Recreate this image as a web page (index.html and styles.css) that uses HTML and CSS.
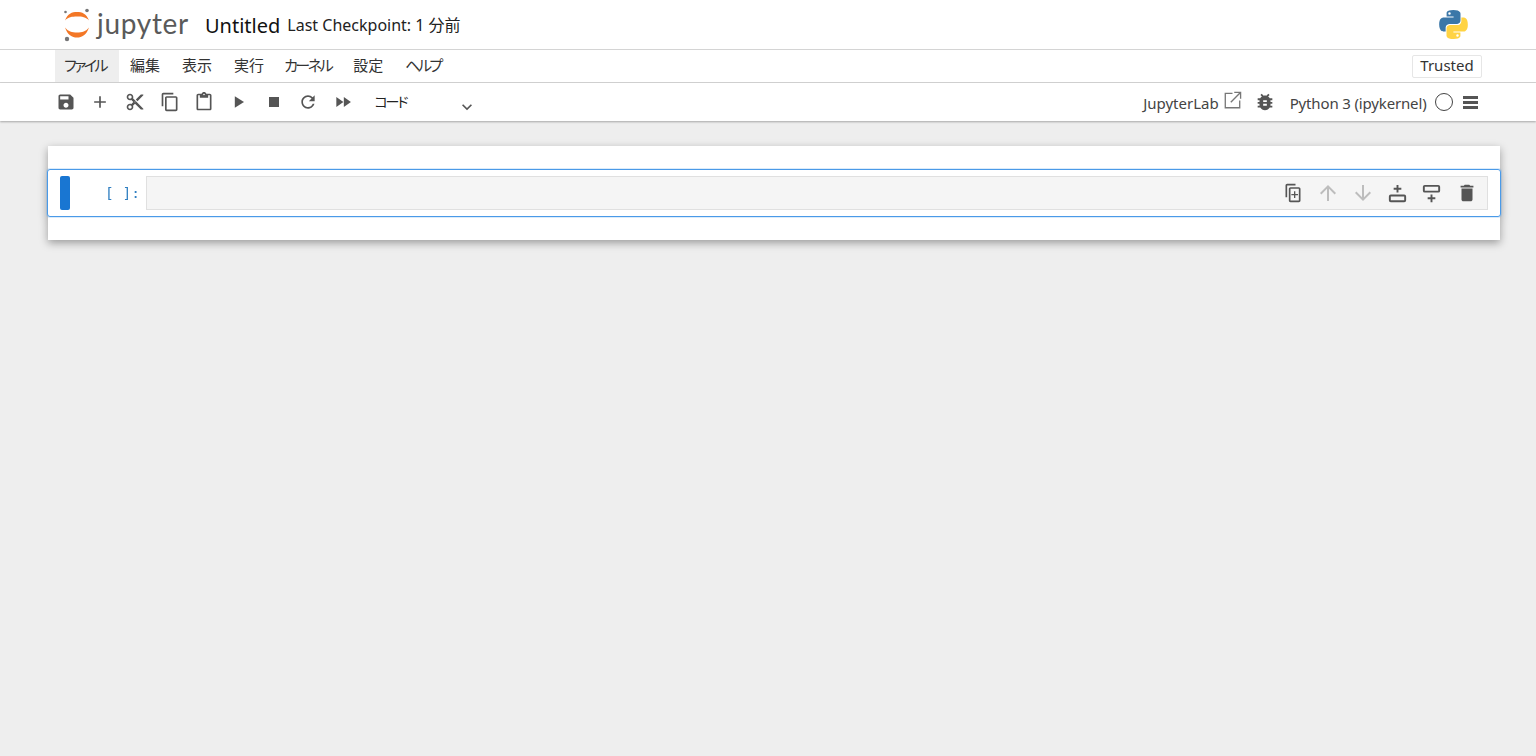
FILE: index.html
```html
<!DOCTYPE html>
<html lang="ja">
<head>
<meta charset="utf-8">
<title>Untitled</title>
<link rel="stylesheet" href="styles.css">
</head>
<body>
<header class="header">
  <div class="brand">
    <svg class="brand-mark" viewBox="0 0 28 34" aria-hidden="true">
      <path class="swirl" d="M2 12.5C4.5 5.5 9 4 14 4s9.500 1.500 12 8.500C23 9 19 8.500 14 8.500S5 9 2 12.500z"/>
      <path class="swirl" d="M2 19.500C4.500 27 9 29.500 14 29.500s9.500-2.500 12-10C23 23.500 19 24.500 14 24.500S5 23.500 2 19.500z"/>
      <circle class="dot" cx="2.500" cy="4" r="1.300"/>
      <circle class="dot" cx="24" cy="2.500" r="1.800"/>
      <circle class="dot" cx="4" cy="31" r="2.200"/>
    </svg>
    <span class="wordmark">jupyter</span>
  </div>
  <span class="nb-name">Untitled</span>
  <span class="checkpoint">Last Checkpoint: 1 分前</span>
  <span class="spacer"></span>
  <svg class="py-logo" viewBox="0 0 111 111" aria-hidden="true">
    <path class="py-blue" d="M54.900 0C26.900.1 29.100 12.200 29.100 12.200v12.500h26.700v3.800H18.500S.6 26.400.6 54.700c0 28.300 15.600 27.300 15.600 27.300h9.300V68.900s-.5-15.600 15.400-15.600h26.500s14.900.2 14.900-14.400V14.700S84.500 0 54.900 0zM40.200 8.500a4.800 4.800 0 1 1 0 9.600 4.800 4.800 0 0 1 0-9.600z"/>
    <path class="py-yellow" transform="rotate(180 55.500 55.500)" d="M54.900 0C26.900.1 29.100 12.200 29.100 12.200v12.500h26.700v3.800H18.500S.6 26.400.6 54.700c0 28.300 15.600 27.300 15.600 27.300h9.300V68.900s-.5-15.600 15.400-15.600h26.500s14.900.2 14.900-14.400V14.700S84.500 0 54.900 0zM40.200 8.500a4.800 4.800 0 1 1 0 9.600 4.800 4.800 0 0 1 0-9.600z"/>
  </svg>
</header>

<nav class="menubar">
  <a class="menu-item kana active">ファイル</a>
  <a class="menu-item">編集</a>
  <a class="menu-item">表示</a>
  <a class="menu-item">実行</a>
  <a class="menu-item kana tight">カーネル</a>
  <a class="menu-item">設定</a>
  <a class="menu-item kana">ヘルプ</a>
  <span class="spacer"></span>
  <span class="trusted">Trusted</span>
</nav>

<div class="toolbar">
  <button class="tool"><svg viewBox="0 0 24 24"><path d="M17 3H5c-1.110 0-2 .9-2 2v14c0 1.100.89 2 2 2h14c1.100 0 2-.9 2-2V7l-4-4zm-5 16c-1.660 0-3-1.340-3-3s1.340-3 3-3 3 1.340 3 3-1.340 3-3 3zm3-10H5V5h10v4z"/></svg></button>
  <button class="tool"><svg viewBox="0 0 24 24"><path d="M19 13h-6v6h-2v-6H5v-2h6V5h2v6h6v2z"/></svg></button>
  <button class="tool"><svg viewBox="0 0 24 24"><path d="M9.640 7.640c.23-.5.36-1.050.36-1.640 0-2.210-1.790-4-4-4S2 3.790 2 6s1.790 4 4 4c.59 0 1.140-.13 1.640-.36L10 12l-2.360 2.360C7.140 14.130 6.590 14 6 14c-2.210 0-4 1.790-4 4s1.790 4 4 4 4-1.790 4-4c0-.59-.13-1.140-.36-1.640L12 14l7 7h3v-1L9.640 7.640zM6 8c-1.100 0-2-.89-2-2s.9-2 2-2 2 .89 2 2-.9 2-2 2zm0 12c-1.100 0-2-.89-2-2s.9-2 2-2 2 .89 2 2-.9 2-2 2zm6-7.500c-.28 0-.5-.22-.5-.5s.22-.5.5-.5.5.22.5.5-.22.5-.5.5zM19 3l-6 6 2 2 7-7V3h-3z"/></svg></button>
  <button class="tool"><svg viewBox="0 0 24 24"><path d="M16 1H4c-1.100 0-2 .9-2 2v14h2V3h12V1zm3 4H8c-1.100 0-2 .9-2 2v14c0 1.100.9 2 2 2h11c1.100 0 2-.9 2-2V7c0-1.100-.9-2-2-2zm0 16H8V7h11v14z"/></svg></button>
  <button class="tool"><svg viewBox="0 0 24 24"><path d="M19 2h-4.180C14.400.84 13.300 0 12 0c-1.300 0-2.400.84-2.820 2H5c-1.100 0-2 .9-2 2v16c0 1.100.9 2 2 2h14c1.100 0 2-.9 2-2V4c0-1.100-.9-2-2-2zm-7 0c.55 0 1 .45 1 1s-.45 1-1 1-1-.45-1-1 .45-1 1-1zm7 18H5V4h2v3h10V4h2v16z"/></svg></button>
  <button class="tool"><svg viewBox="0 0 24 24"><path d="M7 5v14l11-7z"/></svg></button>
  <button class="tool"><svg viewBox="0 0 24 24"><path d="M6 6h12v12H6z"/></svg></button>
  <button class="tool"><svg viewBox="0 0 24 24"><path d="M17.650 6.350C16.200 4.900 14.210 4 12 4c-4.420 0-7.990 3.580-7.990 8s3.570 8 7.990 8c3.730 0 6.840-2.550 7.730-6h-2.080c-.82 2.330-3.040 4-5.650 4-3.310 0-6-2.690-6-6s2.690-6 6-6c1.660 0 3.140.69 4.220 1.780L13 11h7V4l-2.350 2.350z"/></svg></button>
  <button class="tool"><svg viewBox="0 0 24 24"><path d="M4 18l8.500-6L4 6v12zm9-12v12l8.500-6L13 6z"/></svg></button>
  <div class="cell-type">
    <span class="cell-type-label">コード</span>
    <svg class="chevron" viewBox="0 0 24 24"><path d="M7.410 8.590 12 13.170l4.590-4.580L18 10l-6 6-6-6z"/></svg>
  </div>
  <span class="spacer"></span>
  <span class="tool-text">JupyterLab</span>
  <svg class="ext-icon" viewBox="0 0 24 24"><path d="M21 21H3V3h9v1.500H4.500v15h15V12H21zM14 2h8v8h-1.500V4.600l-9.900 9.900-1.100-1.100 9.900-9.900H14z"/></svg>
  <svg class="bug-icon" viewBox="0 0 24 24"><path d="M20 8h-2.810c-.45-.78-1.070-1.450-1.820-1.960L17 4.410 15.590 3l-2.170 2.170C12.960 5.060 12.490 5 12 5c-.49 0-.96.06-1.410.17L8.410 3 7 4.410l1.620 1.630C7.880 6.550 7.260 7.220 6.810 8H4v2h2.090c-.05.33-.09.66-.09 1v1H4v2h2v1c0 .34.04.67.09 1H4v2h2.810c1.040 1.790 2.970 3 5.190 3s4.150-1.210 5.190-3H20v-2h-2.090c.05-.33.09-.66.09-1v-1h2v-2h-2v-1c0-.34-.04-.67-.09-1H20V8zm-6 8h-4v-2h4v2zm0-4h-4v-2h4v2z"/></svg>
  <span class="tool-text kernel">Python 3 (ipykernel)</span>
  <span class="kernel-circle"></span>
  <span class="burger"><i></i><i></i><i></i></span>
</div>

<main class="site">
  <section class="notebook">
    <div class="cell">
      <div class="collapser"></div>
      <div class="prompt">[ ]:</div>
      <div class="input">
        <button class="cell-tool"><svg viewBox="0 0 24 24"><path d="M15 1H5c-1.100 0-2 .9-2 2v14h2V3h10V1zm4 4H9c-1.100 0-2 .9-2 2v14c0 1.100.9 2 2 2h10c1.100 0 2-.9 2-2V7c0-1.100-.9-2-2-2zm0 16H9V7h10v14zM13.200 10v3.200H10v1.600h3.200V18h1.600v-3.200H18v-1.600h-3.200V10z"/></svg></button>
        <button class="cell-tool muted"><svg viewBox="0 0 24 24"><path d="M4 12l1.410 1.410L11 7.830V20h2V7.830l5.580 5.590L20 12l-8-8-8 8z"/></svg></button>
        <button class="cell-tool muted"><svg viewBox="0 0 24 24"><path d="M20 12l-1.410-1.410L13 16.170V4h-2v12.170l-5.580-5.590L4 12l8 8 8-8z"/></svg></button>
        <button class="cell-tool wide"><svg viewBox="0 0 24 24"><path d="M11 3h2v3h3v2h-3v3h-2V8H8V6h3zM5 13h14a2 2 0 0 1 2 2v4a2 2 0 0 1-2 2H5a2 2 0 0 1-2-2v-4a2 2 0 0 1 2-2zm0 2v4h14v-4z"/></svg></button>
        <button class="cell-tool wide"><svg viewBox="0 0 24 24"><path d="M5 3h14a2 2 0 0 1 2 2v4a2 2 0 0 1-2 2H5a2 2 0 0 1-2-2V5a2 2 0 0 1 2-2zm0 2v4h14V5zM11 13h2v3h3v2h-3v3h-2v-3H8v-2h3z"/></svg></button>
        <button class="cell-tool trash"><svg viewBox="0 0 24 24"><path d="M6 19c0 1.100.9 2 2 2h8c1.100 0 2-.9 2-2V7H6v12zM19 4h-3.500l-1-1h-5l-1 1H5v2h14V4z"/></svg></button>
      </div>
    </div>
  </section>
</main>
</body>
</html>
```
FILE: styles.css
```css
* { box-sizing: border-box; }
html, body { height: 100%; }
body {
  margin: 0;
  background: #eeeeee;
  color: #333;
  font-family: "Noto Sans", "Noto Sans CJK JP", sans-serif;
  font-size: 15px;
  font-feature-settings: "palt";
  display: flex;
  flex-direction: column;
  overflow: hidden;
}
.spacer { flex: 1; }

.header {
  height: 50px;
  flex: none;
  background: #fff;
  border-bottom: 1px solid #d4d4d4;
  display: flex;
  align-items: center;
  padding: 0 68px 0 63px;
}
.brand { display: flex; align-items: center; width: 142px; }
.brand-mark { width: 28px; height: 34px; margin-top: 1px; }
.swirl { fill: #f37726; }
.dot { fill: #767677; }
.wordmark {
  margin-left: 6px;
  margin-top: -3px;
  font-family: "Lato", sans-serif;
  font-size: 28px;
  line-height: 30px;
  letter-spacing: .7px;
  color: #5a5a5a;
}
.nb-name { font-size: 20px; color: #111; margin-top: 1px; }
.checkpoint { font-size: 16px; color: #222; margin-left: 7px; margin-top: -1px; }
.py-logo { width: 29px; height: 29px; }
.py-blue { fill: #3b77a8; }
.py-yellow { fill: #ffd343; }

.menubar {
  height: 33px;
  flex: none;
  background: #fff;
  border-bottom: 1px solid #d4d4d4;
  display: flex;
  align-items: stretch;
  gap: 2px;
  padding: 0 54px 0 55px;
}
.menu-item {
  display: flex;
  align-items: center;
  padding: 0 11px 3px 9px;
  font-size: 15px;
  color: #333;
}
.menu-item.kana { letter-spacing: -2.500px; }
.menu-item.tight { margin-left: -2px; }
.menu-item.active { background: #eeeeee; min-width: 64px; }
.trusted {
  align-self: center;
  height: 23px;
  width: 70px;
  margin-top: 1px;
  padding-bottom: 3px;
  display: flex;
  align-items: center;
  justify-content: center;
  background: #fff;
  border: 1px solid #e6e6e6;
  border-radius: 2px;
  color: #333;
}

.toolbar {
  height: 38px;
  flex: none;
  background: #fff;
  box-shadow: 0 1px 2px rgba(0, 0, 0, .3);
  display: flex;
  align-items: center;
  padding: 0 58px 0 48.200px;
}
.tool {
  width: 34.700px;
  height: 30px;
  padding: 0;
  border: 0;
  background: none;
  display: flex;
  align-items: center;
  justify-content: center;
}
.tool svg { width: 20px; height: 20px; fill: #555; }
.cell-type {
  width: 116px;
  margin-left: 14px;
  display: flex;
  align-items: center;
  justify-content: space-between;
  font-size: 14px;
  color: #222;
}
.cell-type-label { letter-spacing: -2px; margin-top: -3px; }
.chevron { width: 20px; height: 20px; fill: #555; margin-top: 9px; margin-right: 13px; }
.tool-text { font-size: 15px; color: #444; margin-top: 1px; }
.ext-icon { width: 21px; height: 21px; fill: #777; margin-left: 3px; margin-top: -3px; }
.bug-icon { width: 22px; height: 22px; fill: #555; margin-left: 11.500px; }
.kernel { margin-left: 13.500px; letter-spacing: -.15px; }
.kernel-circle {
  width: 18px;
  height: 18px;
  border: 1.500px solid #444;
  border-radius: 50%;
  margin-left: 8.500px;
}
.burger {
  width: 15px;
  margin-left: 10px;
  display: flex;
  flex-direction: column;
  gap: 2px;
}
.burger i { height: 3px; background: #555; }

.site { flex: 1; padding: 25px 35px 0 47px; }
.notebook {
  width: 1454px;
  padding: 23px 0;
  background: linear-gradient(#fff, #fff) 1px 0 / 1452px 100% no-repeat;
  filter: drop-shadow(0 3px 4px rgba(0, 0, 0, .35));
}
.cell {
  height: 48px;
  background: #fff;
  border: 1px solid #4a9ae8;
  border-radius: 3px;
  box-shadow: 0 0 0 1px rgba(74, 154, 232, .2);
  padding: 6px 12px;
  display: flex;
  align-items: stretch;
}
.collapser { width: 10px; background: #1976d2; border-radius: 2px; }
.prompt {
  width: 76px;
  padding-right: 6px;
  font-family: "DejaVu Sans Mono", monospace;
  font-size: 14.500px;
  color: #307fc1;
  display: flex;
  align-items: center;
  justify-content: flex-end;
  white-space: pre;
}
.input {
  flex: 1;
  background: #f5f5f5;
  border: 1px solid #e0e0e0;
  display: flex;
  align-items: center;
  justify-content: flex-end;
  padding-right: 3px;
}
.cell-tool {
  width: 34.700px;
  height: 24px;
  padding: 0;
  border: 0;
  background: none;
  display: flex;
  align-items: center;
  justify-content: center;
}
.cell-tool svg { width: 20px; height: 20px; fill: #555; }
.cell-tool.muted svg { width: 24px; height: 24px; fill: #bdbdbd; }
.cell-tool.wide svg { width: 23px; height: 23px; }
.cell-tool.trash svg { width: 22px; height: 22px; }
```
